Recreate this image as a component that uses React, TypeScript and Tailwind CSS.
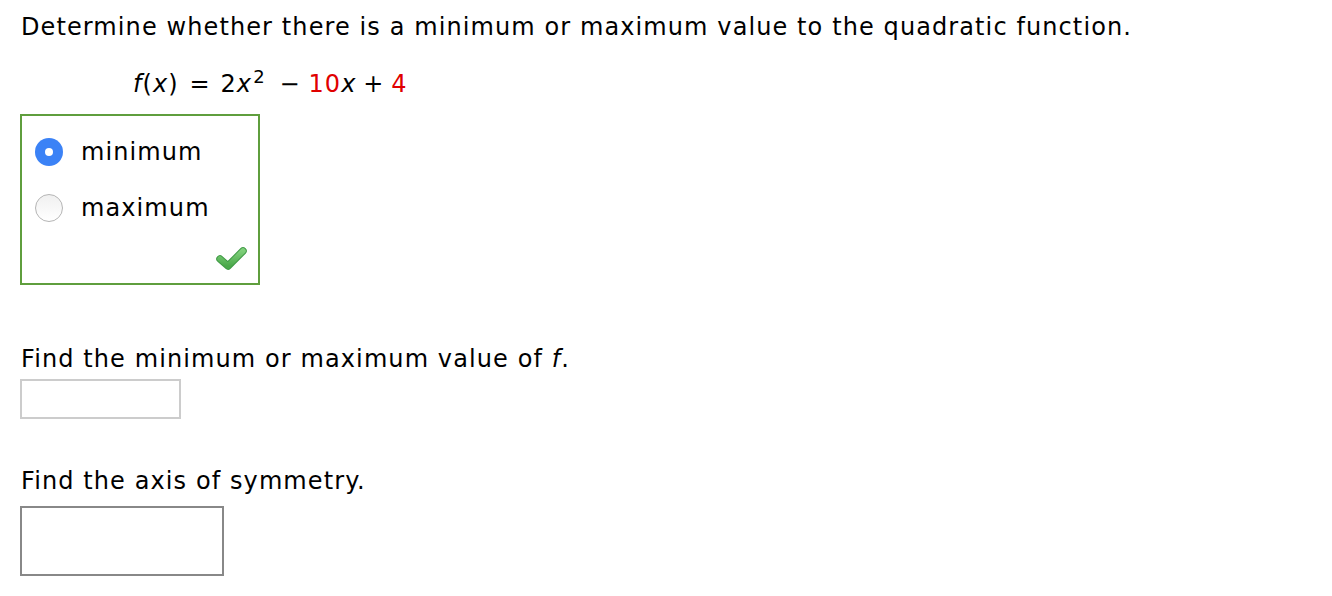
import React from "react";

export default function App() {
  const t = "text-[24px] leading-[32px] tracking-[1.1px]";
  return (
    <div
      className="min-h-[596px] w-[1332px] bg-white text-black"
      style={{ fontFamily: '"DejaVu Sans", Verdana, sans-serif' }}
    >
      <div className="flex flex-col items-start pl-[21px] pt-[11px]">
        <p className={t}>
          Determine whether there is a minimum or maximum value to the quadratic function.
        </p>
        <p className={`ml-[112px] mt-[25px] whitespace-pre ${t}`}>
          <i>f</i>(<i>x</i>)<span className="ml-[2px]">{" = "}</span>
          <span className="ml-[1px]">2</span>
          <i>x</i>
          <sup className="ml-[1px] text-[18px]">2</sup>
          <span className="ml-[5px]">{" − "}</span>
          <span className="-ml-[1px] text-[#e00000]">10</span>
          <i>x</i>
          <span className="-ml-[2px]">{" + "}</span>
          <span className="-ml-[2px] text-[#e00000]">4</span>
        </p>
        <div className="-ml-[1px] mt-[14px] flex h-[171px] w-[240px] flex-col border-2 border-[#5f9e3d] px-[13px] pt-[20px]">
          <label className="flex items-center gap-[18px]">
            <span className="flex h-[28px] w-[28px] items-center justify-center rounded-full bg-[#3b82f6]">
              <span className="h-[8px] w-[8px] rounded-full bg-white" />
            </span>
            <span className={t}>minimum</span>
          </label>
          <label className="mt-[24px] flex items-center gap-[18px]">
            <span className="h-[28px] w-[28px] rounded-full border border-[#b5b5b5] bg-gradient-to-b from-[#f0f0f0] to-white" />
            <span className={t}>maximum</span>
          </label>
          <div className="mt-auto mb-[12px] -mr-[2px] flex justify-end">
            <svg width="32" height="26" viewBox="0 0 32 26">
              <defs>
                <linearGradient id="ck" x1="0" y1="0" x2="0" y2="1">
                  <stop offset="0" stopColor="#7fcf7a" />
                  <stop offset="1" stopColor="#4aa84a" />
                </linearGradient>
              </defs>
              <path
                d="M5 14 L13 21 L28 6"
                fill="none"
                stroke="#3f9a45"
                strokeWidth="7.5"
                strokeLinecap="round"
                strokeLinejoin="round"
              />
              <path
                d="M5 14 L13 21 L28 6"
                fill="none"
                stroke="url(#ck)"
                strokeWidth="5.5"
                strokeLinecap="round"
                strokeLinejoin="round"
              />
            </svg>
          </div>
        </div>
        <p className={`mt-[58px] ${t}`}>
          Find the minimum or maximum value of <i>f</i>.
        </p>
        <div className="-ml-[1px] mt-[4px] h-[40px] w-[161px] border-2 border-[#cccccc] bg-white" />
        <p className={`mt-[46px] ${t}`}>Find the axis of symmetry.</p>
        <div className="-ml-[1px] mt-[9px] h-[70px] w-[204px] border-2 border-[#888888] bg-white" />
      </div>
    </div>
  );
}
